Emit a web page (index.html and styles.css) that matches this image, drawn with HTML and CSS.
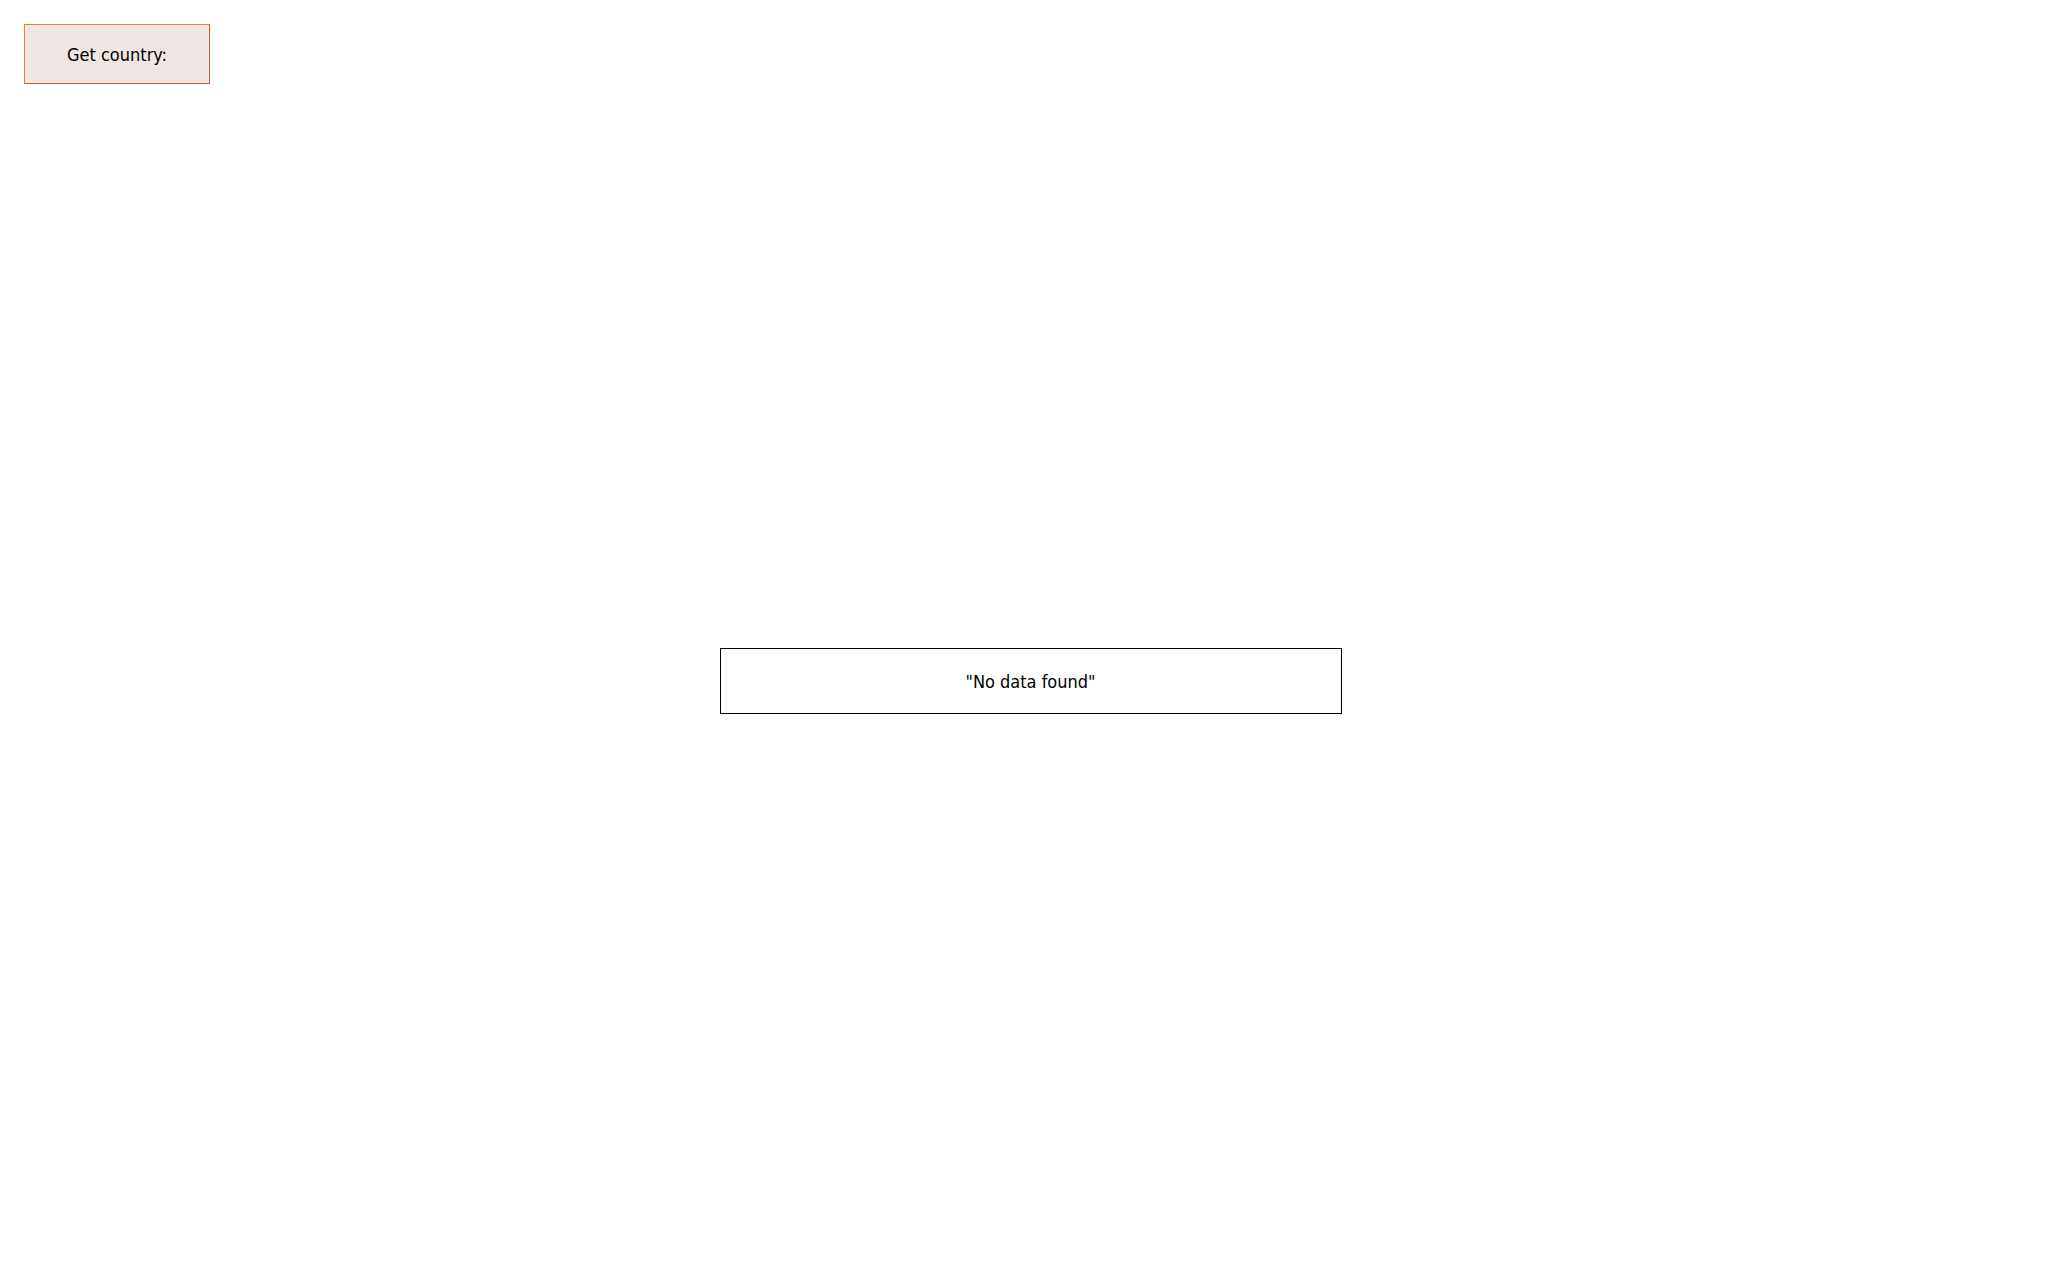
FILE: index.html
```html
<!DOCTYPE html>
<html lang="en">
<head>
<meta charset="utf-8">
<title>Get country</title>
<link rel="stylesheet" href="styles.css">
</head>
<body>
<div class="page">
  <div class="toolbar">
    <button class="get-btn" type="button">Get country:</button>
  </div>
  <div class="stage">
    <div class="result">"No data found"</div>
  </div>
</div>
</body>
</html>
```

FILE: styles.css
```css
html, body {
  margin: 0;
  padding: 0;
  background: #ffffff;
}
body {
  font-family: "DejaVu Sans Condensed", "DejaVu Sans", Verdana, sans-serif;
  color: #000;
}
.page {
  display: flex;
  flex-direction: column;
  min-height: 100vh;
}
.toolbar {
  padding: 24px 0 0 24px;
}
.get-btn {
  box-sizing: border-box;
  width: 186px;
  height: 60px;
  background: #efe6e4;
  border: 1px solid;
  border-color: #ee7f33 #b5642c #b5642c #ee7f33;
  font-family: inherit;
  font-size: 18px;
  color: #000;
  padding: 0;
}
.stage {
  flex: 1;
  display: flex;
  align-items: center;
  justify-content: center;
  padding-top: 2px;
}
.result {
  box-sizing: border-box;
  width: 622px;
  height: 66px;
  border: 1px solid #000;
  display: flex;
  align-items: center;
  justify-content: center;
  font-size: 18px;
}
```
